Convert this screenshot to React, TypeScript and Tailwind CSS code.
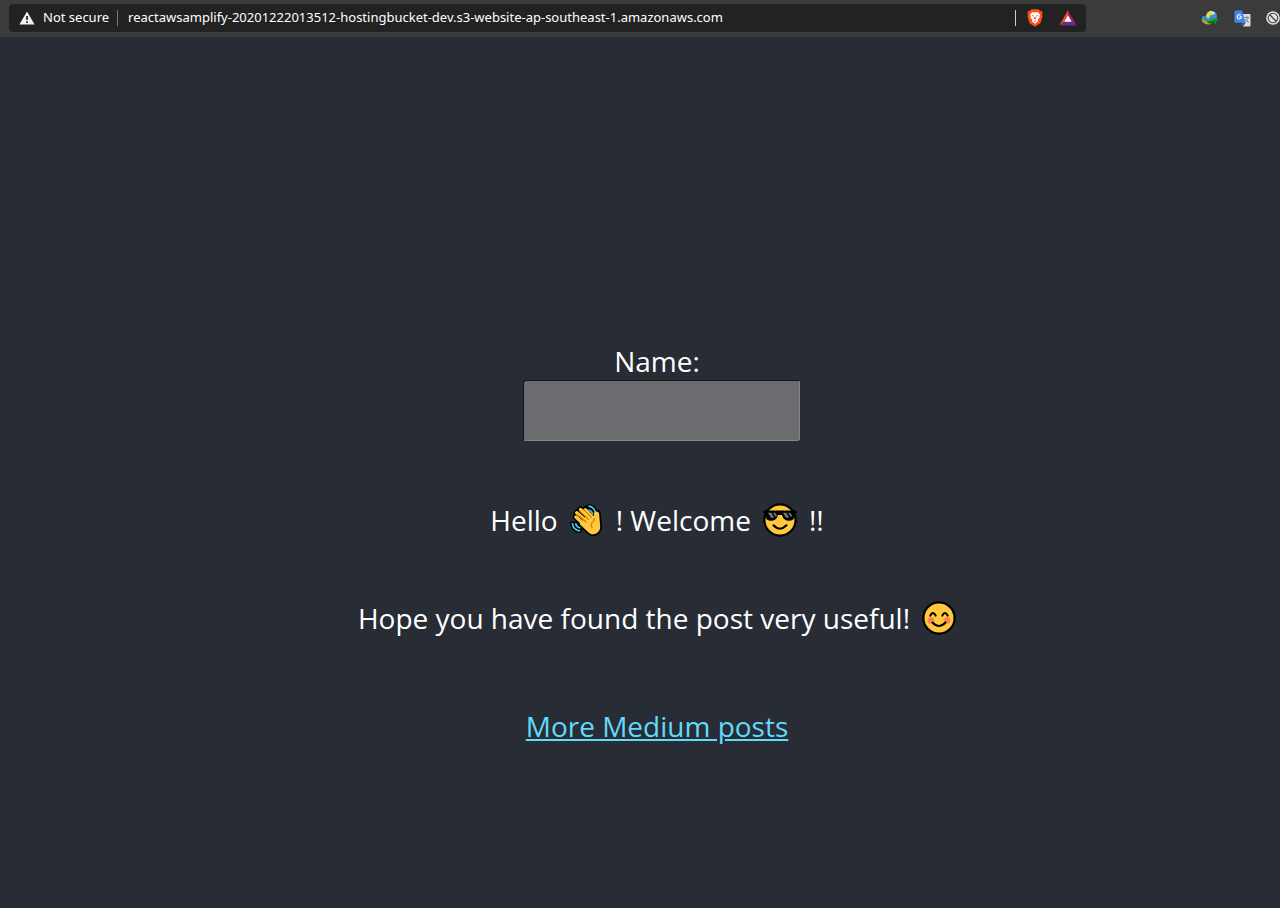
import { useState } from "react";

function WarningIcon() {
  return (
    <svg viewBox="0 0 16 14" className="h-[14px] w-4 shrink-0" aria-hidden="true">
      <path d="M8 0.5 15.6 13.5H0.4Z" fill="#f1f1f1" />
      <path d="M7.2 5h1.7v4H7.2zM7.2 10.2h1.7v1.7H7.2z" fill="#222" />
    </svg>
  );
}

function LionIcon() {
  return (
    <svg viewBox="0 0 16 18" className="h-[18px] w-4" aria-hidden="true">
      <path d="M4.5 0.3h7L13 2l1.4-.2 1.3 2.4-.6 1.6.4 1.4-2 7L8 17.8l-5.5-3.6-2-7 .4-1.4L.3 4.2 1.6 1.8 3 2Z" fill="#fb4f14" />
      <path
        d="m5.3 2.9 2.7.5 2.7-.5 2.4 2.8-.7 1.4.2 1.6-1.8 2.1.4 1.5L8 14.8l-3.2-2.5.4-1.5-1.8-2.1.2-1.6-.7-1.4Z"
        fill="#fff"
      />
      <path d="m4.4 5.9 2.4.5.3 1-.9.2ZM11.6 5.9l-2.4.5-.3 1 .9.2ZM7.4 8h1.2l.4 1.8-1 .6-1-.6Z" fill="#fb4f14" />
      <path d="m6.4 12 1.6-.7 1.6.7L8 13.1Z" fill="#fb8a62" />
    </svg>
  );
}

function TriangleIcon() {
  return (
    <svg viewBox="0 0 18 16" className="h-4 w-[18px]" aria-hidden="true">
      <path d="M9 0.3 0.3 15.6 6 11.2 9 6Z" fill="#ff4b1f" />
      <path d="M9 0.3 17.7 15.6 12 11.2 9 6Z" fill="#9e1f63" />
      <path d="M0.3 15.6H17.7L12.2 11.2H5.8Z" fill="#662d91" />
      <path d="M9 5.2 12.7 11.8H5.3Z" fill="#fff" />
    </svg>
  );
}

function GlobeArrowIcon() {
  return (
    <svg viewBox="0 0 18 16" className="h-4 w-[18px]" aria-hidden="true">
      <ellipse cx="5.8" cy="10.8" rx="5.2" ry="3.5" fill="#e0a020" transform="rotate(20 5.8 10.8)" />
      <ellipse cx="5.2" cy="9" rx="4.6" ry="2.4" fill="#2f95c4" transform="rotate(20 5.2 9)" />
      <circle cx="10.6" cy="6.2" r="5.4" fill="#3d8ee0" />
      <path d="M5.3 7a5.4 5.4 0 0 1 5-6.2L10.4 4 7.4 8.6Z" fill="#f2d544" />
      <path d="M9.6 1 13.2 2l.8 2-3.6.9Z" fill="#d8ecb4" />
      <path d="M5.4 11.3 11 9.4 9.8 7.8l7 1.2-2.6 5.2-1.2-1.8-5.2 1.2Z" fill="#14a31b" />
      <path d="m6.2 12 5.8-1 3-1.5-1.4 3.2-5.6.9Z" fill="#067510" />
    </svg>
  );
}

function TranslateIcon() {
  return (
    <svg viewBox="0 0 17 17" className="h-[17px] w-[17px]" aria-hidden="true">
      <path d="M6 4h9.5a1 1 0 0 1 1 1v10.5a1 1 0 0 1-1 1H9Z" fill="#dedede" />
      <path d="M0.5 1.5a1 1 0 0 1 1-1H8l3.7 12.3H1.5a1 1 0 0 1-1-1Z" fill="#4285f4" />
      <path d="M8 12.8h3.7L9.2 16.4Z" fill="#2555b3" />
      <path d="M5.4 6.7h2a2.1 2.1 0 1 1-.7-1.5" fill="none" stroke="#fff" strokeWidth="1.1" />
      <path d="M10.5 7.5H15M12.8 6.2v1.3M14.3 7.5c-.5 2-1.6 3.4-3 4.5M11.4 9c.7 1.5 1.9 2.8 3.4 3.6" fill="none" stroke="#6d7c86" strokeWidth="0.9" />
    </svg>
  );
}

function BlockedIcon() {
  return (
    <svg viewBox="0 0 14 14" className="h-[14px] w-[14px]" aria-hidden="true">
      <circle cx="7" cy="7" r="6.8" fill="#e4e4e4" />
      <circle cx="7" cy="7" r="4.7" fill="#e4e4e4" stroke="#444" strokeWidth="1.1" />
      <path d="m3.8 3.8 6.4 6.4" stroke="#444" strokeWidth="1.4" />
    </svg>
  );
}

function WaveEmoji() {
  return (
    <svg viewBox="0 0 34 34" className="h-[34px] w-[34px]" role="img" aria-label="Waving hand">
      <g fill="none" strokeLinecap="round" strokeLinejoin="round">
        <g stroke="#000" strokeWidth="4.6">
          <path d="M19 3.2q5 .8 6.4 6.2M19.2 7.2q2.5.8 3.4 3.4" />
          <path d="M2.5 20.5q.5 6.4 7 7.3M5.8 20.8q.8 3.2 4 4" />
        </g>
        <path
          d="m6 14 7.5 7M6.8 9.7l10 8.8M10.5 6.6l9.5 9M16 5.8l8 8"
          stroke="#000"
          strokeWidth="6.4"
        />
        <path
          d="M24 17.5V10.8q0-2.4 2.4-2.3 2.6.2 2.8 3l.9 10.5q.7 5.6-3.4 8.3-4.4 2.6-8.2-.8L9.5 21 17 12Z"
          fill="#000"
          stroke="#000"
          strokeWidth="3.6"
        />
        <g stroke="#45c8ed" strokeWidth="1.7">
          <path d="M19 3.2q5 .8 6.4 6.2M19.2 7.2q2.5.8 3.4 3.4" />
          <path d="M2.5 20.5q.5 6.4 7 7.3M5.8 20.8q.8 3.2 4 4" />
        </g>
        <path d="m6 14 8.5 8M6.8 9.7l10 8.8M10.5 6.6l10 9.5M15.5 6.8l8.5 9" stroke="#ffc83d" strokeWidth="3.4" />
        <path
          d="M24 17.5V10.8q0-2.4 2.4-2.3 2.6.2 2.8 3l.9 10.5q.7 5.6-3.4 8.3-4.4 2.6-8.2-.8L9.5 21 17 12Z"
          fill="#ffc83d"
        />
        <path d="m8 11.8 8 7.2M10 8.4l8.6 8M13.8 6.6l7.5 7.6M24.3 15.3q.2 2.3-1.7 3.8-2.5 2.2-.5 5.2" stroke="#d67d00" strokeWidth="1.2" />
      </g>
    </svg>
  );
}

function SunglassesEmoji() {
  return (
    <svg viewBox="0 0 34 34" className="h-[34px] w-[34px]" role="img" aria-label="Smiling face with sunglasses">
      <circle cx="17" cy="17" r="15.6" fill="#ffc83d" stroke="#000" strokeWidth="2.2" />
      <path
        d="M0.5 7.5h33v2.8l-2 1v2.2q-.7 4.3-5.5 4.3-5.6 0-7-5.8h-4q-1.4 5.8-7 5.8-4.8 0-5.5-4.3v-2.2l-2-1Z"
        fill="#000"
      />
      <path d="M5 9.8h3.3l3 5H8Zm5 0h2l2 2.8-1 1.6ZM20 9.8h3.3l3 5H23Zm5 0h2l2 2.8-1 1.6Z" fill="#777" />
      <path d="M10.5 22.3q6.3 6.8 13 0" fill="none" stroke="#000" strokeWidth="2" strokeLinecap="round" />
    </svg>
  );
}

function SmileEmoji() {
  return (
    <svg viewBox="0 0 34 34" className="h-[34px] w-[34px]" role="img" aria-label="Smiling face with smiling eyes">
      <circle cx="17" cy="17" r="15.6" fill="#ffc83d" stroke="#000" strokeWidth="2.2" />
      <circle cx="9" cy="19.5" r="3.3" fill="#ff8257" />
      <circle cx="25" cy="19.5" r="3.3" fill="#ff8257" />
      <path
        d="M8.3 14.6q2.5-5 5.4 0M20.3 14.6q2.5-5 5.4 0M10.5 21.5q6.3 7 13 0"
        fill="none"
        stroke="#000"
        strokeWidth="2"
        strokeLinecap="round"
      />
    </svg>
  );
}

function BrowserBar() {
  return (
    <header className="flex h-[37px] items-center justify-between overflow-hidden bg-[#3b3b3b] pb-px pl-[9px] font-['Segoe_UI','Noto_Sans',sans-serif]">
      <div className="flex h-7 min-w-0 flex-1 items-center rounded bg-[#222222] pl-[10px] pr-[9px] text-[13px] text-white">
        <WarningIcon />
        <span className="ml-2 whitespace-nowrap">Not secure</span>
        <span className="ml-2 h-4 w-px bg-[#777]" />
        <input
          type="text"
          aria-label="Address"
          defaultValue="reactawsamplify-20201222013512-hostingbucket-dev.s3-website-ap-southeast-1.amazonaws.com"
          className="ml-[10px] min-w-0 flex-1 bg-transparent outline-none"
        />
        <span className="h-4 w-px bg-[#ccc]" />
        <button type="button" aria-label="Shields" className="ml-[11px]">
          <LionIcon />
        </button>
        <button type="button" aria-label="Rewards" className="ml-4">
          <TriangleIcon />
        </button>
      </div>
      <div className="ml-[115px] flex shrink-0 items-center gap-[15px]">
        <button type="button" aria-label="Download manager">
          <GlobeArrowIcon />
        </button>
        <button type="button" aria-label="Translate">
          <TranslateIcon />
        </button>
        <button type="button" aria-label="Blocker">
          <BlockedIcon />
        </button>
      </div>
    </header>
  );
}

export default function App() {
  const [name, setName] = useState("");

  return (
    <div className="flex min-h-screen flex-col bg-[#282c34] font-['Segoe_UI','Open_Sans',sans-serif]">
      <BrowserBar />
      <main className="flex flex-1 flex-col items-center pl-[34px] pt-[305px] text-center text-[28px] leading-[38px] text-white">
        <label htmlFor="name">Name:</label>
        <input
          id="name"
          type="text"
          value={name}
          onChange={(e) => setName(e.target.value)}
          className="ml-2 h-[61px] w-[277px] rounded-[3px] border border-b-[#858585] border-l-[#161616] border-r-[#858585] border-t-[#161616] bg-[#6a6c70] px-2 outline-none"
        />
        <p className="mt-[60px] flex items-center gap-3">
          <span>Hello {name}</span>
          <WaveEmoji />
          <span>! Welcome</span>
          <SunglassesEmoji />
          <span>!!</span>
        </p>
        <p className="mt-[60px] flex items-center gap-3">
          <span>Hope you have found the post very useful!</span>
          <SmileEmoji />
        </p>
        <a href="#posts" className="mt-[70px] text-[#61dafb] underline">
          More Medium posts
        </a>
      </main>
    </div>
  );
}
